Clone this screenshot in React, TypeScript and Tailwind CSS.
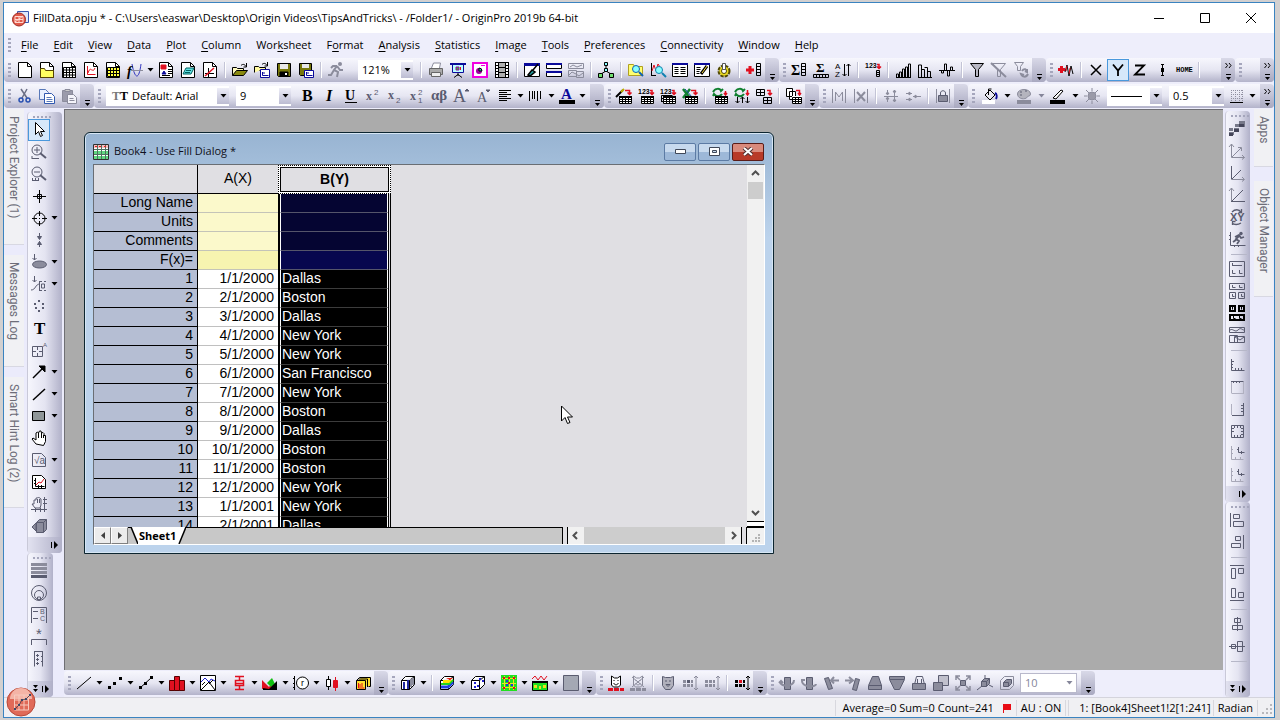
import type { ReactNode } from "react";

const K = "#000";
const G = "#8b8c9c";
const D = "#5a5c70";
const R = "#e01020";
const N = "#0a0a9a";

const p = (d: string, stroke = K, fill = "none", width = 1) => (
  <path key={d + stroke + fill} d={d} stroke={stroke} fill={fill} strokeWidth={width} />
);

const t = (text: string, x: number, y: number, size: number, fill = K, className = "font-['Liberation_Sans']") => (
  <text key={text + x + y} x={x} y={y} fontSize={size} fill={fill} className={className}>
    {text}
  </text>
);

const grid = (x: number, y: number, cols: number, rows: number, w: number, h: number) => {
  let d = "";
  for (let i = 0; i <= cols; i++) d += `M${x + i * w} ${y}v${rows * h}`;
  for (let j = 0; j <= rows; j++) d += `M${x} ${y + j * h}h${cols * w}`;
  return d;
};

const PAGE = "M1.5 .5h9l4 4v11h-13z";
const FOLD = "M10.5 .5v4h4";
const RED_TURN = "M9 2.500h4.500v4M11.500 4.500l2 2 2-2";
const SERIF = "font-['Liberation_Serif'] font-bold";
const smallGrid = (c = K) => (
  <g key="grid">
    <path d="M3 8h13v8H3z" fill="#fff" />
    {p(grid(3.5, 9.5, 4, 3, 3, 2), c)}
    {p("M3 9h13", c, "none", 2)}
  </g>
);
const page = (...inside: ReactNode[]) => [p(PAGE, K, "#fff"), p(FOLD), ...inside];
const lens = (x: number, y: number, c: string, fill = "#8ff") => (
  <g key="lens">
    {p(`M${x + 3} ${y + 3}l4 4`, c, "none", 2)}
    <circle cx={x} cy={y} r={3.5} stroke={c} fill={fill} />
  </g>
);
const cubeFace = (c: string, fill: string) => p("M1.500 5.500l4-4h9v8l-5 5h-8zM1.500 5.500h8l5-4M9.500 5.500v9", c, fill);
const facemask = (c: string, fill: string) => (
  <g key="mask">
    {p("M3.500 1v9l2 2h5l2-2v-9l-3 2h-3z", c, fill)}
    {p("M6 5v1M10 5v1M5.500 8l2 2h1l2-2", c)}
  </g>
);
const dots = (c: string, c2: string) => [
  p("M1 6.500h3M5 6.500h3M9 6.500h2M1 10.500h3M5 10.500h3M9 10.500h2", c, "none", 3),
  p("M5 6.500h3", c2, "none", 3),
  p("M14 1v14M12 3l2-2 2 2M12 13l2 2 2-2", c),
];

const icons: Record<string, ReactNode> = {
  newProject: page(),
  newFolder: page(p("M1.500 15.500v-9h4l1 2h8v7h-13z", "#554400", "#ffff60")),
  newBook: page(p(grid(2.5, 5.5, 4, 4, 3, 2.5))),
  newGraph: page(p("M4.500 4v8.500h8", R), p("M5 11c2-6 3-3 4-3s1 2 3-2", R)),
  newMatrix: page(p("M3 6h11v9h-11z", "none", "#ffff40"), p(grid(2.5, 5.5, 4, 3, 3, 3))),
  newFunction: [p("M5 2c3 16 7 16 9 0", "#3438c0"), p("M4 8.500h12", G), t("f", 0, 14, 14, K, `${SERIF} italic`)],
  newLayout: page(
    p("M3 3h5v4h-5z", R, R),
    p("M4 12l2-3 2 3z", N, N),
    p("M10 7.500h4M10 9.500h4M10 11.500h4M4 13.500h8", K)
  ),
  newNotes: page(p("M3 12l3-6h8l-3 6h-8z", "#006060", "#60e0e0"), p("M6 8.500h5M5 10.500h5", "#006060")),
  newDiagram: page(p("M3 11.500h9M6.500 6v9", K), p("M3 14l9-8", R, "none", 1.5)),
  openFile: [
    p("M.5 13.500v-8h4l1 1h6v3", K, "#fffbc0"),
    p("M.5 13.500l4-5h11l-4 5z", K, "#8a8a10"),
    p("M9 3.500c2-2 4-1 5 1M14.500 1v4h-3", K),
  ],
  openTemplate: [
    p("M.5 10.500v-6h4l1 1h6v3h-6", K, "#fff9a0"),
    p("M6.500 7.500h9v8h-9z", N, "#fff"),
    p("M8.500 10v3.500h6M10 12v-2", N),
    p("M8 2.500c2-2 4-1 5 1M13.500 0v4h-3"),
  ],
  save: [p("M1.500 1.500h13v13h-12l-1-1z", K, "#77770a"), p("M4 2h8v5h-8z", "none", "#e8e8e8"), p("M4 10h8v4h-8z", K, K), p("M10 11v2", "#fff", "none", 2)],
  saveTemplate: [p("M1.500 1.500h12v12h-11l-1-1z", K, "#77770a"), p("M4 2h7v4h-7z", "none", "#e8e8e8"), p("M6.500 8.500h9v7h-9z", N, "#fff"), p("M8.500 10v3.500h6M10 12v-2", N)],
  run: [p("M9 4l-3 4 4 2-1 5M6 8l-3 5h-3M9 4l3 4h3M9 4h-4l-2 2", G, "none", 2), <circle key="h" cx="12" cy="2" r="2" fill={G} />],
  print: [p("M3.500 6l2-5h7l-1 5", G, "#fff"), p("M1.500 6.500h13v6h-13z", "#666", "#aaa"), p("M3.500 10.500h9v4h-9z", "#666", "#eee")],
  slides: [p("M2.500 3v7.500h11v-7.500", N, "#bff"), p("M0 2h16", N, "none", 2), p("M8 11v3M4 15.500l4-3 4 3", K), p("M6 5h3v3h-3z", "#a000a0", "#30c030"), p("M10.500 5v3", R)],
  video: [p("M1 1h14v14h-14z", "#f000e0", "#fff", 2), <circle key="c" cx="7" cy="9" r="3" fill="#a000a0" />, p("M9 3.500h4", "#f000e0"), p("M7 9v-3a3 3 0 0 1 3 3z", K, "#30c0c0")],
  film: [p("M1 0h14v16h-14z", "none", K), p("M5 1h6v4h-6zM5 6h6v4h-6zM5 11h6v4h-6z", "none", "#b0b0b0"), <path key="holes" d="M3 1v15M13 1v15" stroke="#fff" strokeWidth="2" strokeDasharray="2 1" />],
  codeBuilder: [p("M.5 2.500h15v12h-15z", K, "#fff"), p("M0 2.500h16", N, "none", 3), p("M4 13l4-5 3 2-5 4zM9 8l5-6", K, "#20a0a0", 1.5)],
  splitRows: [p("M.5 1.500h15v5h-15zM.5 9.500h15v5h-15z", K, "#fff"), p("M0 2h16M0 10h16", N, "none", 2)],
  dualWave: [p("M.5 1.500h15v5h-15zM.5 8.500h8v6h-8zM8.500 9.500h7v6h-7z", G), p("M2 5l3-2 4 2 5-2M1 13l3-3 4 2 3 2 4-3", G)],
  tree: [
    p("M8 4v3M8 9l-5 3M8 9l5 3"),
    p("M6.500.5h3v3h-3z", K, "#8ff"),
    p("M.5 11.500h4v4h-4zM11.500 11.500h4v4h-4z", K, "#70e070"),
    p("M6.500 6.500h3v3h-3z", K, "#8ff"),
  ],
  findFolder: [p("M.5 13.500v-11h5l1 2h8v9z", "#b0a020", "#ffff70"), lens(8, 7, "#1060b0")],
  findGraph: [p("M1.500 1v13M1 13.500h5", K), p("M2 9l2-6 2 6 2-7 2 3", R), lens(9, 8, "#1080b0")],
  results: [p("M.5 1.500h15v13h-15z", K, "#fff"), p("M0 2h16", N, "none", 2), p("M2.500 5.500h4M8.500 5.500h5M2.500 7.500h4M8.500 7.500h5M2.500 9.500h4M8.500 9.500h5M2.500 11.500h4M8.500 11.500h5")],
  editResults: [p("M.5 1.500h15v13h-15z", K, "#fff"), p("M0 2h16", N, "none", 2), p("M2.500 5.500h4M2.500 7.500h4M2.500 9.500h3M2.500 11.500h3"), p("M7 12l6-8", K, "none", 3), p("M8 11l5-7", "#ffe040")],
  gear: [
    <circle key="a" cx="8" cy="9" r="5" stroke="#504800" fill="#e8d820" strokeDasharray="3 1" strokeWidth={3} />,
    <circle key="b" cx="8" cy="9" r="4.500" fill="#e8d820" />,
    <circle key="c" cx="8" cy="9" r="2.500" stroke="#504800" fill="#fff" />,
    p("M6.500 1.500h3v6h-3z", "#555", "#fff"),
  ],
  addColumn: [p("M0 8h8M4 4v8", R, "none", 3), p(grid(10.5, 1.5, 1, 4, 4, 3), K, "#fff")],
  sumColumn: [t("Σ", 0, 13, 14, K, SERIF), p(grid(10.5, 1.5, 1, 4, 4, 3), K, "#fff")],
  sumRow: [t("Σ", 3, 10, 13, K, SERIF), p(grid(0.5, 12.5, 5, 1, 3, 3), K, "#fff")],
  sort: [t("A", 0, 7, 8), t("Z", 0, 15, 8), p("M9.500 2v12M7.500 12l2 2 2-2M13.500 14v-12M11.500 4l2-2 2 2")],
  setValues: [t("123", 0, 6, 7, K, "font-['Liberation_Sans'] font-bold"), p("M12 2.500h2v4M12 4.500l2 2 2-2", R, "none", 1.5), p(grid(11.5, 8.5, 1, 3, 3, 2), K, "#fff")],
  barsUp: [p("M1.500 15v-3h2v3M4.500 15v-5h2v5M7.500 15v-8h2v8M10.500 15v-10h2v10M13.500 15v-13h2v13M1 15.500h15")],
  bars: [p("M1.500 15v-12h3v12M4.500 7.500h3v8M7.500 5.500h3v10M10.500 9.500h3v6M1 15.500h14")],
  stock: [p("M0 8.500h16M2.500 8v3h2v-3M5.500 8v-6h2v6M8.500 8v6h2v-6M11.500 8v-3h2v3")],
  filter: [p("M1.500 1.500h13l-5 6v7h-3v-7z", K, "#b8b8c4")],
  filterOff: [p("M1.500 1.500h13l-5 6v7h-3v-7z", G), p("M0 1l15 14", G, "none", 2)],
  filterRedo: [p("M1.500 .5h9l-3 4v4h-3v-4z", G), p("M9 9c2-3 5-2 5 1l-2-1M15 12c-2 4-6 3-7 0l3 1M14 7v4", G, "none", 2)],
  addPeak: [p("M0 7.500h7M3.500 4v7", R, "none", 3), p("M7 10l2-7 2 11 2-10 2 8", K), p("M8 9l1-5M11 12l1-6", R)],
  xAxis: [p("M3 3l10 10M13 3l-10 10", K, "none", 1.5)],
  yAxis: [p("M3 2.500l5 6 5-6M8 8v6", K, "none", 1.8)],
  zAxis: [p("M3 3.500h9l-9 9h10", K, "none", 1.8)],
  errorBar: [p("M8.500 2v12M7 2.500h3M7 13.500h3"), p("M8.500 6v4", K, "none", 3)],
  home: [t("HOME", 0, 10, 7, K, "font-['Liberation_Mono'] font-bold")],

  cut: [p("M4 1l6 9M10 1l-5 9", "#6a6e84", "none", 1.5), <circle key="a" cx="4" cy="12" r="2" stroke="#2850b0" strokeWidth="1.500" />, <circle key="b" cx="11" cy="12" r="2" stroke="#2850b0" strokeWidth="1.500" />],
  copy: [p("M.5 1.500h6l3 3v7h-9z", "#5878b8", "#e8f0ff"), p("M5.500 5.500h7l3 3v7h-10z", "#3058b0", "#fff"), p("M7.500 9.500h5M7.500 11.500h6M7.500 13.500h6", "#5878b8")],
  paste: [p("M1.500 2.500h10v11h-10z", G, "#9b9bab"), p("M4 1.500h5v2h-5z", G, "#ccc"), p("M6.500 6.500h6l3 3v6h-9z", G, "#f4f4fa"), p("M8.500 10.500h4M8.500 12.500h5", G)],
  bold: [t("B", 3, 13, 16, K, SERIF)],
  italic: [t("I", 5, 13, 16, K, `${SERIF} italic`)],
  underline: [t("U", 2, 12, 14, K, SERIF), p("M2 14.500h12")],
  superscript: [t("x", 1, 12, 12, D, SERIF), t("2", 9, 7, 8, D)],
  subscript: [t("x", 1, 11, 12, D, SERIF), t("2", 9, 15, 8, D)],
  supersub: [t("x", 1, 12, 12, D, SERIF), t("2", 9, 7, 8, D), t("1", 9, 15, 8, D)],
  greek: [t("αβ", 0, 12, 15, D, SERIF)],
  bigger: [t("A", 0, 14, 18, D, "font-['Liberation_Serif']"), p("M12 3l2-2 2 2z", D, D)],
  smaller: [t("A", 2, 14, 14, D, "font-['Liberation_Serif']"), p("M11 2l2 2 2-2z", D, D)],
  align: [p("M2 2.500h12M2 4.500h8M2 6.500h12M2 8.500h8M2 10.500h12M2 12.500h8")],
  lines: [p("M1.500 3v10M4.500 3v8M6.500 3v8M9.500 3v10M12.500 3v8")],
  fontColor: [t("A", 2, 11, 15, N, SERIF), p("M0 14h16", K, "none", 4)],
  wizard: [p("M0 9l7-7", K, "none", 2), p("M5 4l3-3", "#c0b000", "none", 2), p(RED_TURN, R, "none", 1.5), smallGrid()],
  import123: [t("123", 0, 6, 7, K, "font-['Liberation_Sans'] font-bold"), p("M12 2.500h2v4M12 4.500l2 2 2-2", R, "none", 1.5), smallGrid()],
  importMulti: [t("123", 0, 6, 7, K, "font-['Liberation_Sans'] font-bold"), p("M12 2.500h2v4M12 4.500l2 2 2-2", R, "none", 1.5), p("M1.500 14v-6.500h11M1 10.500h3M1 13.500h3"), smallGrid()],
  excel: [p("M1 1l7 9M8 1l-7 9", "#108030", "none", 2.5), p("M3 1l7 8", "#1050a0"), p(RED_TURN, R, "none", 1.5), smallGrid()],
  reimport: [p("M1 4c2-4 7-4 8-1l2-2M10 6c-2 3-6 3-8 0l-1 2", "#108030", "none", 2), p("M13.500 3v3.500M12 5l1.500 2 1.500-2", R, "none", 1.5), smallGrid()],
  reimportAll: [p("M1 4c2-4 7-4 8-1l2-2M10 6c-2 3-6 3-8 0l-1 2", "#108030", "none", 2), p("M13.500 2v4M12 5l1.500 2 1.500-2", R, "none", 1.5), p("M3.500 9v6M1.500 13l2 2 2-2M8.500 15v-6M6.500 11l2-2 2 2M13.500 9v6M11.500 13l2 2 2-2")],
  cloneImport: [p(grid(0.5, 1.5, 2, 2, 4, 3), K, "#fff"), p("M11 2.500h3v4M12 5l2 2 2-2", R, "none", 1.5), p(grid(7.5, 9.5, 2, 2, 4, 3), K, "#fff")],
  batch: [p("M.5.5h6v8h-6zM3.500 3.500h6v8h-6z", K, "#fff"), p("M10 2.500h3.500v4M12 5l1.500 2 1.500-2", R, "none", 1.5), p("M6 8h10v8h-10z", "none", "#fff"), p(grid(6.5, 9.5, 3, 3, 3, 2))],
  maskM: [p("M1.500 1v14M14.500 1v14M4.500 13v-9l3.500 5 3.500-5v9", G)],
  maskX: [p("M1.500 1v14M14.500 1v14", G), p("M4 4l8 9M12 4l-8 9", G, "none", 2)],
  nudgeV: [p("M4.500 2v4M4.500 10v4M11.500 2v12M1 8.500h14", G), p("M3 5h3l-1.500 2zM3 11h3l-1.500-2zM10 4h3l-1.500-2zM10 12h3l-1.500 2z", G, G)],
  nudgeH: [p("M1 5.500h6M1 11.500h6M8 8.500h8", G), p("M4 4v3l2-1.500zM5 10v3l-2-1.500zM11 7v3l-2-1.500z", G, G)],
  lock: [p("M1.500 1v14M14.500 1v14", G), p("M5.500 7v-2c0-3 5-3 5 0v2", D), p("M3.500 7.500h9v6h-9z", D, G)],
  fill: [p("M3 7l5-5 5 5-5 5z", K, "#e8e8f0"), p("M6.500 7v-6h3", K), p("M13 5c2 1 2 4 1 6", N, "none", 2), p("M0 14h13", "#fff", "none", 4)],
  palette: [p("M1.500 6c0-6 13-6 13 0 0 3-3 1-4 4-4 2-9 0-9-4z", G, "#b4b4be"), p("M4 4h2M9 3h2M4 7h2", D), p("M1 14h14", G, "none", 4)],
  lineColor: [p("M3 10l8-8 2 1-7 8z", K, "#fff"), p("M0 14h15", K, "none", 4)],
  light: [<circle key="c" cx="8" cy="8" r="4" fill="#9a9aa8" stroke={G} />, p("M8 0v3M8 13v3M0 8h3M13 8h3M2 2l3 3M14 2l-3 3M2 14l3-3M14 14l-3-3", G)],
  border: [
    <path key="dots" d="M2 2.500h12M2 6.500h12M2 10.500h12M2.500 2v12M6.500 2v12M10.500 2v12M13.500 2v12" stroke="#9090a0" strokeDasharray="1 1" />,
    p("M1 14.500h13", K),
  ],

  pointer: [p("M4.500.5v12l3-3 2 5 2-1-2-4h4z", K, "#fff")],
  zoomIn: [p("M9 9l6 5", D, "none", 2), <circle key="c" cx="6" cy="6" r="5" stroke={D} />, p("M3 6h6M6 3v6M1 12v3M1 14.500h7", D)],
  zoomOut: [p("M9 9l6 5", D, "none", 2), <circle key="c" cx="6" cy="6" r="5" stroke={D} />, p("M3 6h6M1.500 12v3M4.500 12v3M7.500 12v3M1 14.500h7", D)],
  crosshair: [p("M8.500 2v13M2 8.500h13"), p("M6.500 6.500h4v4h-4z")],
  reader: [<circle key="c" cx="8.500" cy="8.500" r="5.500" stroke={K} />, p("M8.500 1v5M8.500 11v5M1 8.500h5M11 8.500h5M8 8.500h1")],
  pickV: [p("M8.500 1v6M8.500 9v6", D), p("M6.500 4.500h4l-2 3zM6.500 12.500h4l-2-3z", D, D)],
  regionPick: [p("M3.500 0v6M1.500 4l2 2 2-2", D), <ellipse key="e" cx="8.500" cy="10.500" rx="7" ry="3.500" fill={G} stroke={D} />],
  regionMask: [p("M3.500 0v6M1.500 4l2 2 2-2M0 14c5 0 4-6 9-6M8 5.500h3M13 5.500h2M8.500 5v10M8 14.500h3M13 14.500h2M10.500 8v4h3v-4z", D)],
  scatter: [p("M7 3h2M3 6h2M11 6h2M4 10h2M11 10h2M7 13h2", D, "none", 2)],
  text: [t("T", 3, 14, 17, K, SERIF)],
  annotate: [p("M1.500 4.500h10v10h-10zM1 9.500h4M8 9.500h4M6.500 4v4M6.500 11v4", D), t("A", 12, 5, 6, D)],
  arrow: [p("M2 14l9-9", K, "none", 1.5), p("M8 2h6v6z", K, K)],
  line: [p("M2 14l12-11", K, "none", 1.5)],
  rect: [p("M1.500 3.500h12v9h-12z", K, "#8f9698")],
  hand: [p("M5 14l-4-5 1-1 3 2v-7l1.500-1 1 1 1-2 1.500 0 .5 2 1.500-.5 1 1v2l1.500 0v6l-2 4z", K, "#fff"), p("M7.500 3v5M10.500 3v5M12.500 5v3")],
  equation: [p("M1.500 1.500h9l4 4v9h-13z", D), t("√a", 3, 12, 10, D)],
  insertGraph: [p("M1.500 1.500h9l4 4v9h-13z", K, "#fff"), p("M4.500 4v8.500h9M3 6.500h2M3 9.500h2M7.500 11v3M10.500 11v3"), p("M5 11l3-3 2 1 3-4", R)],
  pan: [p("M4 12l-3-4h2v-4h2v-2h1.500l1-1 1 1 1.500 1v6l-1 3zM6.500 3v4M8.500 3v4", D), p("M13.500 1v15M12 3.500h4M12 7.500h4M0 13.500h16M4.500 12v4M9.500 12v4", D)],
  cube: [p("M5.500 4.500l3-3h7v10l-3 3h-7zM5.500 4.500h7v10M12.500 4.500l3-3", D, G), p("M5 5l-4 4 4 4z", D, G)],
  bands: [p("M0 1.500h16M0 5.500h16M0 9.500h16", G, "none", 3), p("M0 13.500h16", D, "none", 3)],
  rings: [<circle key="a" cx="8" cy="8" r="7.500" stroke={D} />, <circle key="b" cx="8" cy="10" r="4.500" stroke={D} />, p("M6.500 15v-3h3v3", D)],
  legend: [p("M.5 16v-15.500h15v15.500M2 4.500h5M2 11.500h5", D), t("B", 9, 7, 7, D), t("C", 9, 14, 7, D)],
  asterisk: [t("*", 5, 10, 15, D), p("M.5 16v-5.500h15v5.500", D)],
  ruler: [p("M3.500 0v15.500M11.500 0v15.500M3 .5h9M5 4.500h3M5 8.500h3M5 12.500h3M6.500 3v3M6.500 7v3M6.500 11v3M10 5.500h2M10 10.500h2", D)],

  layers: [p("M0 12.500h5M5 8.500h5M10 4.500h6M0 8.500h4M6 4.500h4M10 1.500h6", "#77798a", "none", 3), p("M0 13.500h4M5 9.500h5M10 4.500h5", "#45465a", "none", 3)],
  axes3: [p("M2.500 1v13.500h13M3 14l9-9M0 4l2.500-3 2.500 3M13 12l2.500 2.500-2.500 2M9 4.500h3.500v3.500", G)],
  axesDown: [p("M2.500 1v13.500M3 14l9-9", D), p("M3 14.500h12M13 12l2.500 2.500-2.500 2", G)],
  axesUp: [p("M2 14.500h14M3 14l11-11", D), p("M2.500 1v13M0 4l2.500-3 2.500 3", G)],
  swapXY: [t("XY", 1, 12, 11, D, "font-['Liberation_Sans'] font-bold"), p("M3 3c3-3 7-3 9 0M12.500 0v3.500h-3M12 14c-3 2-7 2-9 0M3.500 16v-3.500h3", D, "none", 1.3)],
  runAxis: [p("M1.500 1v13.500h15M0 4.500h2M0 8.500h2M5.500 14v2M9.500 14v2", D), p("M10 5l-3 3 3 2-2 3M6 6l4-2 2 3 3-1M7 9l-3 2", D, "none", 1.8), <circle key="c" cx="12" cy="2.500" r="1.700" fill={D} />],
  panelOne: [p("M.5.5h15v15h-15zM3 4.500h10M3.500 2v3M3.500 9v3.500h3M10.500 9v3.500h3", D)],
  panelFour: [p("M.5 .5h15v6h-15zM.5 9.500h6v6h-6zM9.500 9.500h6v6h-6zM3.500 2v2.500h3M10.500 2v2.500h3M3.500 11v2.500h2M12.500 11v2.500h2", D)],
  panelTwo: [p("M1 1h5v5h-5zM10 1h5v5h-5zM1 10h14v5h-14z", K, "none", 2), p("M3.500 2v2.500M12.500 2v2.500M4.500 11v2.500h2M10.500 11v2.500h2")],
  panelWave: [p("M.5 .5h15v5h-15zM.5 8.500h8v7h-8zM5.500 9.500h10v6h-10zM1 3c3-2 5 3 8 0s4 0 6 0M6 10l5 3 4-3", D)],
  frameL: [p("M2.500 2v11.500h13M2 4.500h3M2 7.500h2M2 10.500h2M6.500 13v-2M9.500 13v-2M12.500 13v-2", D)],
  frameT: [p("M2 2.500h12.500M4.500 2v2M7.500 2v2M10.500 2v2", D), p("M2.500 3v11.500M3 14.500h12M14.500 3v11", "#b0b0c0")],
  frameR: [p("M14.500 2v12.500M12 4.500h2M12 7.500h2M12 10.500h2M3 14.500h12", D), p("M2.500 3v11", "#b0b0c0")],
  frameAll: [p("M2.500 2.500h12v12h-12zM5.500 3v2M8.500 3v2M11.500 3v2M3 5.500h2M12 5.500h2M3 8.500h2M12 8.500h2M12 11.500h2M5.500 12v2M8.500 12v2M11.500 12v2", D)],
  inset: [p("M2.500 1v13.500h12M2 4.500h2M2 8.500h2M6.500 14v-2M11.500 14v-2", "#a8a8b8"), p("M9.500 2v5.500h6M8 4.500h2M12.500 6v3", D)],
  alignLeft: [p("M1.500 1v14", D), p("M4.500 2.500h6v4h-6zM4.500 9.500h10v5h-10z", D)],
  alignRight: [p("M14.500 1v14", D), p("M6.500 2.500h5v4h-5zM2.500 9.500h9v4h-9z", D)],
  alignTop: [p("M1 1.500h14", D), p("M2.500 4.500h4v10h-4zM9.500 4.500h5v5h-5z", D)],
  alignBottom: [p("M1 14.500h14", D), p("M2.500 2.500h4v9h-4zM9.500 6.500h5v5h-5z", D)],
  alignCenter: [p("M8.500 1v14M5.500 2.500h6v4h-6zM3.500 9.500h10v4h-10z", D)],
  alignMiddle: [p("M0 8.500h16M2.500 6.500h4v4h-4zM8.500 3.500h5v10h-5z", D)],

  linePlot: [p("M1 14l14-12", K)],
  scatterPlot: [p("M1 12.500h3M6 8.500h3M12 3.500h3", K, "none", 3)],
  lineSymbol: [p("M2 13l11-10", K), p("M1 12.500h3M6 8.500h3M12 2.500h3", K, "none", 3)],
  column: [p("M.5 5.500h5v10h-5zM5.500 1.500h5v14h-5zM10.500 5.500h5v10h-5z", "#500", R)],
  multiPanel: [p("M.5.5h15v15h-15z", K, "#fff"), p("M1 7l4-4 4 4 2-3 4 2", "#2020d0"), p("M1 15l8-8 6 8M2 10l3-3M9 9l4-4", K)],
  box: [p("M4 1.500h9M8.500 1v4M4.500 5.500h8v5h-8zM4 8.500h9M8.500 11v4M4 14.500h9", R, "none", 1.5)],
  area: [p("M0 14v-9l7 7 3-4 3 2v4z", "none", R), p("M5 8l5-5 3 6-4 3z", "none", "#10c010"), p("M7 14l8-8v9h-14v-2z", "none", K)],
  polar: [p("M1.500 1v14M0 3.500h2M0 8.500h2M0 12.500h2"), <circle key="c" cx="9.500" cy="8" r="6" stroke={K} fill="#fff" />, t("r", 8, 11, 9)],
  candle: [p("M4.500 1v14"), p("M2.500 4.500h4v7h-4z", K, "#fff"), p("M11.500 2v14", R), p("M9.500 5.500h4v7h-4z", R, R)],
  template: [p("M4.500 2.500h11v9h-2M1.500 5.500l3-3M1.500 5.500h9v9h-9zM3.500 4h9v8", K, "#ffe030"), p("M3.500 8v5h6M5 12v-3M7 12v-4", R)],
  bars3d: [cubeFace(K, "#fff"), p("M4 14v-7M8 14v-9", "#2028a0", "none", 2), p("M11 12v-8M13 10v-7", G, "none", 2)],
  surface: [cubeFace(K, "#fff"), p("M2 12h7l5-5", "#2040e0", "none", 3), p("M2 9h8l4-4", "#20d020", "none", 2), p("M4 5h9l-3 3h-6z", "none", "#ffe000"), p("M7 3h7l-3 2z", "none", "#f02010")],
  scatter3d: [cubeFace(K, "#fff"), p("M4 8h2M7 11h2M9 4h2M12 6h2M4 12h2", "#2020d0", "none", 2)],
  contour: [p("M0 0h16v16h-16z", "none", "#20e020"), p("M3.500 1v14M8.500 1v14M12.500 1v14M1 3.500h14M1 8.500h14M1 12.500h14", "#f0e020"), p("M2 3h2M12 3h2M7 8h2M2 13h2M12 13h2M7 3h2", R, "none", 2), p("M5 6h2M10 10h2M5 10h2", "#2030e0", "none", 2)],
  contourLine: [p("M0 4l3-3 3 4 3-4 3 4 3-4", R), p("M.5 7.500h15v8h-15z", K, "#20e020"), p("M2 11.500h3M7 12.500h2M11 11.500h3", "#f0e020", "none", 3), p("M0 7h16", K, "none", 2)],
  image: [p("M.5.5h15v15h-15z", D, "#a4a8b4")],
  mask: [facemask(K, "#fff"), p("M0 14.500h5M6 14.500h5M12 14.500h4", R, "none", 3)],
  unmask: [facemask(G, "none"), p("M2 2l12 10M14 2l-12 10", G), p("M0 14.500h5M6 14.500h5M12 14.500h4", G, "none", 3)],
  shield: [p("M2.500 1.500l3 1h5l3-1v9l-3 4h-5l-3-4z", D, "#b0b0bc"), p("M5 6h2M9 6h2M6 9.500h4l-2 2z", D)],
  rangeA: dots(G, D),
  rangeB: dots(G, G),
  rangeC: dots(K, R),
  rotateL: [p("M5.500 2.500h6v12h-6z", D, G), p("M1 7c0 5 14 5 14-2M0 8l2-2 2 2", G, "none", 2)],
  rotateR: [p("M5.500 2.500h6v12h-6z", D, G), p("M15 9c0 4-14 3-14-3M0 5h4", G, "none", 2)],
  tiltL: [p("M1.500 3.500l4-1 4 11-4 1z", D, G), p("M8 5.500h8M11 2l-3 3.500 3 3", G, "none", 2)],
  tiltR: [p("M10.500 3.500l4 1-3 11-4-1z", D, G), p("M0 5.500h7M4 2l4 3.500-4 3", G, "none", 2)],
  perspUp: [p("M5.500 1.500h6l3 9v4h-13v-4zM2 10.500h13", D, G)],
  perspDown: [p("M.5 1.500h15v3l-5 10h-5l-5-10zM1 4.500h14", D, G)],
  boxUp: [p("M5.500 1.500h6l2 8h-10z", D), p("M1.500 8.500h13v6h-13z", D, G), p("M6.500 4v5M10.500 4v5", D)],
  resize3d: [p("M5.500.5h10v10h-10z", D, "#c0c0cc"), p("M.5 7.500h9v8h-9z", D, G)],
  fit: [p("M5.500 5.500h5v5h-5z", D, G), p("M1 1l4 4M15 1l-4 4M1 15l4-4M15 15l-4-4M1 5v-4h4M11 1h4v4M1 11v4h4M11 15h4v-4", G, "none", 1.5)],
  cubeAxis: [p("M4.500 6.500l3-3h5v5l-3 3h-5zM4.500 6.500h5v5M9.500 6.500l3-3M8 0v4M0 15l5-4M12 10l4 2", D, G)],
  cubeFrame: [p("M1.500 5.500l4-4h9v9l-4 4h-9z", G), p("M4.500 7.500l3-3h5v4l-3 3h-5zM4.500 7.500h5v4", D, G)],
};

const Icon = ({ name }: { name: string }) => (
  <svg viewBox="0 0 16 16" className="h-4 w-4 shrink-0 overflow-visible" fill="none" aria-hidden="true">
    {icons[name]}
  </svg>
);

const Caret = ({ dim }: { dim?: boolean }) => (
  <svg viewBox="0 0 7 4" width="7" height="4" className={dim ? "fill-[#85869a]" : "fill-black"} aria-hidden="true">
    <path d="M.5 0h6l-3 3.500z" />
  </svg>
);

const DIM_ARROWS = ["palette"];

/* items: icon names, "|" for a separator, a trailing "+" for a drop-down arrow */
const Tools = ({ items, active, wide }: { items: string; active?: string; wide?: boolean }) => (
  <>
    {items.split(" ").map((item, i) => {
      if (item === "|") return <span key={i} className="mx-[3px] h-4 w-0.5 shrink-0 border-l border-[#c3c4d6] bg-white" />;
      const name = item.replace("+", "");
      return (
        <span key={i} className="flex shrink-0 items-center">
          <button
            type="button"
            aria-label={name}
            className={
              name === active
                ? "flex h-[22px] w-[22px] items-center justify-center border border-[#4a98dc] bg-[#d6e8fa]"
                : "flex h-[22px] w-[22px] items-center justify-center"
            }
          >
            <Icon name={name} />
          </button>
          {item.endsWith("+") && (
            <button
              type="button"
              aria-label={`${name} options`}
              className={wide ? "flex h-5 w-3 items-center justify-center" : "flex h-5 w-[9px] items-center justify-center"}
            >
              <Caret dim={DIM_ARROWS.includes(name)} />
            </button>
          )}
        </span>
      );
    })}
  </>
);

const Grip = () => (
  <span className="mr-0.5 ml-1 h-[14px] w-[3px] shrink-0 bg-[repeating-linear-gradient(to_bottom,#a5a6bc_0_2px,transparent_2px_4px)]" />
);

const Overflow = ({ more }: { more?: boolean }) => (
  <button
    type="button"
    aria-label="Toolbar options"
    className="flex h-full w-3.5 shrink-0 flex-col items-center justify-end gap-1 rounded-r-[4px] bg-linear-to-b from-[#d9d9e8] to-[#a9a9c0] pb-0.5"
  >
    {more && (
      <svg viewBox="0 0 7 5" width="7" height="5" className="mb-0.5" fill="none" stroke="#000" aria-hidden="true">
        <path d="M.5 0l2 2.500-2 2.500M4 0l2 2.500-2 2.500" />
      </svg>
    )}
    <svg viewBox="0 0 7 6" width="7" height="6" aria-hidden="true">
      <path d="M1 0h5v1H1zM1 3h5l-2.500 3z" />
    </svg>
  </button>
);

const Bar = ({ children, more, grow }: { children?: ReactNode; more?: boolean; grow?: boolean }) => (
  <div
    className={
      grow
        ? "flex h-6 min-w-0 grow items-center rounded-[4px] bg-linear-to-b from-[#f7f7fd] via-[#e6e6f2] to-[#b3b3ca]"
        : "flex h-6 shrink-0 items-center rounded-[4px] bg-linear-to-b from-[#f7f7fd] via-[#e6e6f2] to-[#b3b3ca]"
    }
  >
    <Grip />
    {children}
    {grow && <span className="grow" />}
    <Overflow more={more} />
  </div>
);

const Combo = ({ label, value, className, children, dim }: { label: string; value: string; className: string; children?: ReactNode; dim?: boolean }) => (
  <div className={`flex h-5 shrink-0 items-center bg-white ${className}`}>
    {children}
    <select
      aria-label={label}
      disabled={dim}
      className={`h-5 min-w-0 grow appearance-none bg-transparent pl-1 text-[11px] leading-5 outline-none ${dim ? "text-[#85869a]" : "text-black"}`}
    >
      <option>{value}</option>
    </select>
    <span className={dim ? "flex h-4 w-3.5 items-center justify-center" : "flex h-4 w-3 items-center justify-center bg-linear-to-b from-[#eeeef8] to-[#bcbcd2]"}>
      <Caret dim={dim} />
    </span>
  </div>
);

const menus = [
  "&File", "&Edit", "&View", "&Data", "&Plot", "&Column", "Wor&ksheet", "F&ormat", "&Analysis",
  "&Statistics", "&Image", "&Tools", "&Preferences", "&Connectivity", "&Window", "&Help",
];

const MenuBar = () => (
  <nav className="flex h-6 shrink-0 items-center bg-[#eeeefb]">
    <Grip />
    <div className="flex">
      {menus.map((menu) => {
        const [before, after] = menu.split("&");
        return (
          <button key={menu} type="button" className="pr-[7px] pl-2 text-[11px] leading-5">
            {before}
            <span className="underline underline-offset-2">{after[0]}</span>
            {after.slice(1)}
          </button>
        );
      })}
    </div>
  </nav>
);

const TitleBar = () => (
  <header className="flex h-[30px] shrink-0 items-center bg-white pl-2">
    <svg viewBox="0 0 17 17" width="17" height="17" fill="none" aria-hidden="true">
      <path d="M5.500 1.500h11v11h-11z" fill="#dfe8fa" stroke="#3858b0" />
      <circle cx="7" cy="9.500" r="6.500" fill="#e05848" stroke="#a02820" />
      <path d="M3 6.500h8v6H3zM3 9.500h8M7 6v7M3 12l8-6" stroke="#ffd8d0" />
    </svg>
    <h1 className="ml-1 grow truncate text-[11px]">
      FillData.opju * - C:\Users\easwar\Desktop\Origin Videos\TipsAndTricks\ - /Folder1/ - OriginPro 2019b 64-bit
    </h1>
    <button type="button" aria-label="Minimize" className="flex h-7 w-[46px] items-center justify-center">
      <svg width="10" height="10" stroke="#000" aria-hidden="true"><path d="M0 5.500h10" /></svg>
    </button>
    <button type="button" aria-label="Maximize" className="flex h-7 w-[46px] items-center justify-center">
      <svg width="10" height="10" fill="none" stroke="#000" aria-hidden="true"><path d="M.5.5h9v9h-9z" /></svg>
    </button>
    <button type="button" aria-label="Close" className="flex h-7 w-[46px] items-center justify-center">
      <svg width="10" height="10" stroke="#000" aria-hidden="true"><path d="M0 0l10 10M10 0L0 10" /></svg>
    </button>
  </header>
);

const TopTools = () => (
  <div className="flex shrink-0 flex-col gap-0.5 bg-[#eeeefb] py-px">
    <div className="flex">
      <Bar>
        <span className="w-px" />
        <Tools items="newProject newFolder newBook newGraph newMatrix newFunction+ newLayout newNotes newDiagram | openFile openTemplate save saveTemplate | run" />
        <Combo label="Zoom" value="121%" className="mr-1 ml-[11px] w-[55px]" />
        <Tools items="| print slides video film | codeBuilder splitRows dualWave | tree | findFolder findGraph results editResults gear | addColumn" />
      </Bar>
      <Bar>
        <Tools items="sumColumn sumRow sort | setValues | barsUp bars stock | filter filterOff filterRedo" />
      </Bar>
      <Bar more>
        <Tools active="yAxis" items="addPeak | xAxis yAxis zAxis errorBar home |" />
        <span className="w-[18px]" />
      </Bar>
      <Bar more grow />
    </div>
    <div className="flex">
      <Bar>
        <span className="w-px" />
        <Tools items="cut copy paste" />
      </Bar>
      <Bar>
        <Combo label="Font" value="Default: Arial" className="ml-[3px] w-[123px] pl-1.5">
          <span className="font-['Liberation_Serif'] text-xs leading-4 font-bold" aria-hidden="true">
            <span className="text-[#777]">T</span>T
          </span>
        </Combo>
        <Combo label="Font size" value="9" className="mr-[5px] ml-[7px] w-[55px]" />
        <Tools items="bold italic underline superscript subscript supersub greek bigger smaller align+ lines+ fontColor+" />
        <span className="w-[3px]" />
      </Bar>
      <Bar>
        <Tools items="wizard import123 importMulti excel | reimport reimportAll cloneImport | batch" />
      </Bar>
      <Bar>
        <Tools items="maskM maskX | nudgeV nudgeH | lock" />
      </Bar>
      <Bar more grow>
        <span className="w-0.5" />
        <Tools wide items="fill+ palette+ lineColor+ light" />
        <div className="mr-[7px] ml-1 flex h-5 w-[55px] shrink-0 items-center bg-white pl-1">
          <span className="h-px grow bg-black" />
          <button type="button" aria-label="Line style" className="ml-2 flex h-4 w-3 items-center justify-center bg-linear-to-b from-[#eeeef8] to-[#bcbcd2]">
            <Caret />
          </button>
        </div>
        <Combo label="Line width" value="0.5" className="mr-0.5 w-[55px]" />
        <Tools items="border+" />
      </Bar>
    </div>
  </div>
);

const BottomTools = () => (
  <div className="flex h-[27px] shrink-0 items-start bg-[#eeeefb] pt-px">
    <Bar>
      <Tools items="linePlot+ scatterPlot+ lineSymbol+ column+ multiPanel+ box+ area+ polar+ candle+ template" />
    </Bar>
    <Bar>
      <Tools items="bars3d+ | surface+ scatter3d+ contour+ contourLine+ image" />
    </Bar>
    <Bar>
      <Tools items="mask unmask | shield rangeA rangeB | rangeC" />
    </Bar>
    <Bar>
      <Tools items="rotateL rotateR tiltL tiltR perspUp perspDown boxUp resize3d fit cubeAxis cubeFrame" />
      <Combo label="Rotation step" value="10" className="mr-1 ml-0.5 w-[57px] border border-[#b9b9cc]" dim />
    </Bar>
  </div>
);

const SideGrip = () => (
  <span className="mt-1 mb-px ml-[5px] h-[2px] w-[18px] shrink-0 bg-[repeating-linear-gradient(to_right,#a5a6bc_0_2px,transparent_2px_4px)]" />
);

/* vertical counterpart of Tools */
const SideTools = ({ items, active }: { items: string; active?: string }) => (
  <>
    {items.split(" ").map((item, i) => {
      if (item === "|") return <span key={i} className="mt-1 mb-[3px] ml-[5px] h-px w-4 shrink-0 bg-[#b6b7c8]" />;
      const name = item.replace("+", "");
      return (
        <span key={i} className="flex h-[22px] shrink-0 items-center">
          <button
            type="button"
            aria-label={name}
            className={
              name === active
                ? "flex h-[22px] w-[22px] items-center justify-center border border-[#4a98dc] bg-[#d6e8fa]"
                : "flex h-[22px] w-[22px] items-center justify-center"
            }
          >
            <Icon name={name} />
          </button>
          {item.endsWith("+") && (
            <button type="button" aria-label={`${name} options`} className="flex h-5 w-[9px] items-center justify-center">
              <Caret />
            </button>
          )}
        </span>
      );
    })}
  </>
);

const SideOverflow = ({ more }: { more?: boolean }) => (
  <button type="button" aria-label="Toolbar options" className="flex h-4 w-full shrink-0 items-center justify-end gap-1 rounded-b-[4px] bg-linear-to-r from-[#e2e2f0] to-[#b0b0c8] pr-1">
    {more && (
      <svg width="5" height="8" aria-hidden="true">
        <path d="M0 0h5l-2.500 3zM0 4h5l-2.500 3z" />
      </svg>
    )}
    <svg width="7" height="8" aria-hidden="true">
      <path d="M0 1h1v6H0zM3 0l4 4-4 4z" />
    </svg>
  </button>
);

const DockTab = ({ label, className }: { label: string; className: string }) => (
  <button
    type="button"
    className={`flex w-full items-center justify-center border-b border-[#d8d8e2] bg-[#f1f1f4] pt-[7px] text-xs leading-4 text-[#6d6d78] [writing-mode:vertical-rl] ${className}`}
  >
    <span className="grow text-left font-[Roboto]">{label}</span>
  </button>
);

const LeftDock = () => (
  <aside className="flex w-[60px] shrink-0 bg-[#ebebfb]">
    <div className="flex w-[22px] shrink-0 flex-col gap-2.5 pr-0.5">
      <DockTab label="Project Explorer (1)" className="h-[136px]" />
      <DockTab label="Messages Log" className="h-[112px]" />
      <DockTab label="Smart Hint Log (2)" className="h-[131px]" />
    </div>
    <div className="flex min-h-0 grow flex-col pt-[3px]">
      <div className="ml-px flex w-[35px] shrink-0 flex-col rounded-[4px] border-l border-[#c9c9d8] bg-linear-to-r from-[#f6f6fd] via-[#e4e4f1] to-[#b1b1c9]">
        <SideGrip />
        <SideTools
          active="pointer"
          items="pointer zoomIn zoomOut crosshair reader+ pickV regionPick+ regionMask+ scatter text annotate arrow+ line+ rect+ hand equation+ insertGraph+ pan cube"
        />
        <SideOverflow />
      </div>
      <div className="ml-px flex min-h-0 w-[26px] grow flex-col rounded-[4px] border-l border-[#c9c9d8] bg-linear-to-r from-[#f6f6fd] via-[#e4e4f1] to-[#b1b1c9]">
        <SideGrip />
        <SideTools items="bands rings legend asterisk ruler" />
        <span className="grow" />
        <SideOverflow more />
      </div>
    </div>
  </aside>
);

const RightDock = () => (
  <aside className="flex w-[51px] shrink-0 gap-1 bg-[#ebebfb] pl-0.5">
    <div className="flex w-[25px] flex-col pt-0.5">
      <div className="flex shrink-0 flex-col rounded-[4px] border-l border-[#c9c9d8] bg-linear-to-r from-[#f6f6fd] via-[#e4e4f1] to-[#b1b1c9]">
        <SideGrip />
        <SideTools items="layers axes3 axesDown axesUp swapXY runAxis | panelOne panelFour panelTwo panelWave | frameL frameT frameR frameAll inset inset" />
        <SideOverflow />
      </div>
      <div className="flex min-h-0 grow flex-col rounded-[4px] border-l border-[#c9c9d8] bg-linear-to-r from-[#f6f6fd] via-[#e4e4f1] to-[#b1b1c9]">
        <SideGrip />
        <SideTools items="alignLeft alignRight | alignTop alignBottom | alignCenter alignMiddle |" />
        <span className="grow" />
        <SideOverflow more />
      </div>
    </div>
    <div className="flex w-[19px] flex-col gap-3.5">
      <DockTab label="Apps" className="h-[58px]" />
      <DockTab label="Object Manager" className="h-[116px]" />
    </div>
  </aside>
);

const cities = [
  "Dallas", "Boston", "Dallas", "New York", "New York", "San Francisco", "New York",
  "Boston", "Dallas", "Boston", "Boston", "New York", "New York", "Dallas",
];

const rows = cities.map((city, i) => ({
  id: i + 1,
  date: `${(i % 12) + 1}/1/${2000 + Math.floor(i / 12)}`,
  city,
}));

const labelRows = ["Long Name", "Units", "Comments", "F(x)="];

const Sheet = () => (
  <table className="w-[297px] table-fixed border-separate border-spacing-0 font-['Liberation_Sans'] text-sm leading-4">
    <colgroup>
      <col className="w-[104px]" />
      <col className="w-[80px]" />
      <col className="w-[113px]" />
    </colgroup>
    <thead>
      <tr className="h-[29px]">
        <td className="border-r border-b border-black bg-[#e0dfe3] p-0" />
        <th scope="col" className="border-b border-black bg-[#e0dfe3] p-0 pb-0.5 font-normal">A(X)</th>
        <th scope="col" className="border border-dotted border-black bg-white p-px">
          <span className="block h-[25px] border border-black bg-[#e0dfe3] leading-[22px]">B(Y)</span>
        </th>
      </tr>
    </thead>
    <tbody>
      {labelRows.map((label) => (
        <tr key={label} className="h-[19px]">
          <th scope="row" className="border-r border-b border-black bg-[#b5bed3] p-0 pr-1 pb-0.5 text-right font-normal">{label}</th>
          <td className={label === "F(x)=" ? "border-b border-[#c4c4b8] bg-[#f7f4b0] p-0" : "border-b border-[#c4c4b8] bg-[#fbf9cb] p-0"} />
          <td className="border-r-[3px] border-l-2 border-double border-black bg-white bg-clip-padding p-0">
            <span
              className={
                label === "F(x)="
                  ? "block h-[19px] border-x border-b border-x-white border-b-[#55556a] bg-[#07074e]"
                  : "block h-[19px] border-x border-b border-x-white border-b-[#55556a] bg-[#050532]"
              }
            />
          </td>
        </tr>
      ))}
      {rows.map((row) => (
        <tr key={row.id} className="h-[19px]">
          <th scope="row" className="border-r border-b border-black bg-[#b5bed3] p-0 pr-1 pb-0.5 text-right font-normal">{row.id}</th>
          <td className="border-b border-[#c0c0c0] bg-white p-0 pr-1 pb-0.5 text-right">{row.date}</td>
          <td className="border-r-[3px] border-l-2 border-double border-black bg-white bg-clip-padding p-0">
            <span className="block h-[19px] border-x border-b border-x-white border-b-[#3c3c3c] bg-black pl-px text-white">
              {row.city}
            </span>
          </td>
        </tr>
      ))}
    </tbody>
  </table>
);

const Chevron = ({ d }: { d: string }) => (
  <svg width="9" height="9" viewBox="0 0 9 9" fill="none" stroke="#505050" strokeWidth="2" aria-hidden="true">
    <path d={d} />
  </svg>
);

const BookWindow = () => (
  <section className="absolute top-[22px] left-[19px] flex h-[422px] w-[690px] flex-col rounded-t-[6px] border border-[#0c2530] bg-linear-to-b from-[#98b4d2] to-[#bcd3ec] to-25% px-2 pb-2 shadow-[inset_0_0_0_1px_#d6e6f4]">
    <div className="flex h-[31px] shrink-0 items-center pt-1.5">
      <svg viewBox="0 0 16 16" width="16" height="16" aria-hidden="true">
        <path d="M.5.5h15v15H.5z" fill="#fff" stroke="#303030" />
        <path d="M1 1h14v3H1z" fill="#f4c0c0" />
        <path d="M1 7h14v3H1zM1 12h14v3H1z" fill="#60d880" />
        <path d="M4.500 1v14M8.500 1v14M12.500 1v14M1 5.500h14M1 10.500h14" stroke="#507060" />
        <path d="M2 2.500h2M6 2.500h2M11 2.500h2" stroke="#e02020" />
      </svg>
      <h2 className="ml-[5px] grow text-[11px] text-[#101020]">Book4 - Use Fill Dialog *</h2>
      <div className="flex gap-0.5">
        <button type="button" aria-label="Minimize book" className="flex h-[18px] w-8 items-center justify-center rounded-[2px] border border-[#5c7ba4] bg-linear-to-b from-[#c8daee] from-50% to-[#9db8d8] to-50%">
          <svg width="11" height="5" aria-hidden="true"><path d="M.5.5h10v4H.5z" fill="#fff" stroke="#404858" /></svg>
        </button>
        <button type="button" aria-label="Maximize book" className="flex h-[18px] w-8 items-center justify-center rounded-[2px] border border-[#5c7ba4] bg-linear-to-b from-[#c8daee] from-50% to-[#9db8d8] to-50%">
          <svg width="11" height="9" fillRule="evenodd" aria-hidden="true"><path d="M.5.5h10v8H.5zM3.500 3.500h4v2h-4z" fill="#fff" stroke="#404858" /></svg>
        </button>
        <button type="button" aria-label="Close book" className="mr-px flex h-[18px] w-8 items-center justify-center rounded-[2px] border border-[#5a1c18] bg-linear-to-b from-[#d98a7c] from-50% to-[#b83a28] to-50%">
          <svg width="12" height="9" aria-hidden="true">
            <path d="M2 1l8 7M10 1L2 8" stroke="#503030" strokeWidth="4" />
            <path d="M2 1l8 7M10 1L2 8" stroke="#fff" strokeWidth="2" />
          </svg>
        </button>
      </div>
    </div>
    <div className="flex min-h-0 grow flex-col border border-t-[#6a6e74] border-r-white border-b-white border-l-[#6a6e74] bg-[#e0dfe3]">
      <div className="flex min-h-0 grow">
        <div className="min-w-0 grow overflow-hidden">
          <Sheet />
        </div>
        <div className="flex w-[17px] shrink-0 flex-col bg-[#f1f1f1]">
          <button type="button" aria-label="Scroll up" className="flex h-[17px] items-center justify-center">
            <Chevron d="M1 6l3.500-3.500L8 6" />
          </button>
          <span className="mx-px h-[17px] bg-[#cdcdcd]" />
          <span className="grow" />
          <button type="button" aria-label="Scroll down" className="flex h-[17px] items-center justify-center">
            <Chevron d="M1 3l3.500 3.500L8 3" />
          </button>
          <span className="h-1.5 border-y border-black bg-white" />
        </div>
      </div>
      <div className="flex h-[17px] shrink-0">
        <button type="button" aria-label="Previous sheet" className="flex w-[17px] items-center justify-center border border-white border-r-[#808080] border-b-[#808080] bg-[#ececec]">
          <svg width="4" height="7" aria-hidden="true"><path d="M4 0v7L0 3.500z" fill="#404040" /></svg>
        </button>
        <button type="button" aria-label="Next sheet" className="flex w-[17px] items-center justify-center border border-white border-r-[#808080] border-b-[#808080] bg-[#ececec]">
          <svg width="4" height="7" aria-hidden="true"><path d="M0 0v7l4-3.500z" fill="#404040" /></svg>
        </button>
        <div className="flex grow border-t border-r border-black bg-[#c8c8c8] pl-px">
          <button type="button" className="-mt-px flex h-[17px] items-center text-[11px] font-bold">
            <svg width="9" height="17" aria-hidden="true"><path d="M2 0l7 17V0z" fill="#fff" /><path d="M2 0l7 17" stroke="#000" strokeWidth="1.500" /></svg>
            <span className="h-[17px] bg-white px-px leading-[17px]">Sheet1</span>
            <svg width="9" height="17" aria-hidden="true"><path d="M9 0L2 17H0V0z" fill="#fff" /><path d="M9 0L2 17" stroke="#000" strokeWidth="1.500" /></svg>
          </button>
        </div>
        <div className="ml-1 flex w-[175px] shrink-0 items-center justify-between border-x border-black bg-[#f1f1f1] px-[3px]">
          <button type="button" aria-label="Scroll left"><Chevron d="M6 1L2.500 4.500 6 8" /></button>
          <span className="mx-1 h-full grow bg-[#cdcdcd]" />
          <button type="button" aria-label="Scroll right"><Chevron d="M3 1l3.500 3.500L3 8" /></button>
        </div>
        <div className="ml-1 flex w-[18px] shrink-0 items-end justify-end border-t border-l border-black bg-[#f1f1f1] pr-1 pb-0.5">
          <svg width="8" height="8" fill="#b4b4b4" aria-hidden="true"><path d="M6 0h2v2H6zM6 3h2v2H6zM3 3h2v2H3zM6 6h2v2H6zM3 6h2v2H3zM0 6h2v2H0z" /></svg>
        </div>
      </div>
    </div>
  </section>
);

const Workspace = () => (
  <main className="relative min-h-0 grow overflow-hidden border-t border-l border-[#6f6f74] bg-[#ababab]">
    <BookWindow />
    <svg className="absolute top-[295px] left-[496px]" width="12" height="20" viewBox="0 0 12 20" aria-hidden="true">
      <path d="M.5 1v15l3.500-3.500L6.500 18.500l2.500-1L6.500 12h5z" fill="#fff" stroke="#000" />
    </svg>
  </main>
);

const StatusBar = () => (
  <footer className="flex h-5 shrink-0 items-center justify-end border-t border-[#d4d4dc] bg-[#f0f0f3] text-[11px]">
    <span className="h-4 border-l border-[#d8d8de] pr-1 pl-[7px] leading-4">Average=0 Sum=0 Count=241</span>
    <svg width="18" height="12" aria-hidden="true">
      <path d="M5 2h8v6H6v3H5z" fill="#e80c14" />
    </svg>
    <span className="h-4 border-x border-[#d8d8de] px-1 leading-4">AU : ON</span>
    <span className="ml-0.5 h-4 border-l border-[#d8d8de] pr-0.5 pl-2.5 leading-4">1: [Book4]Sheet1!2[1:241]</span>
    <span className="h-4 border-x border-[#d8d8de] px-1 leading-4">Radian</span>
    <svg width="16" height="12" fill="#b8b8bc" aria-hidden="true">
      <path d="M12 2h2v2h-2zM12 6h2v2h-2zM8 6h2v2H8zM12 10h2v2h-2zM8 10h2v2H8zM4 10h2v2H4z" />
    </svg>
  </footer>
);

export default function App() {
  return (
    <div className="h-screen overflow-hidden bg-[#d2d0d0] pt-0.5 pr-[5px] pb-0.5 pl-[3px] font-['Open_Sans',sans-serif] text-black">
      <div className="relative flex h-full flex-col overflow-hidden border border-[#3a83c0]">
        <TitleBar />
        <MenuBar />
        <TopTools />
        <div className="flex min-h-0 grow">
          <LeftDock />
          <div className="flex min-w-0 grow flex-col">
            <Workspace />
            <BottomTools />
          </div>
          <RightDock />
        </div>
        <StatusBar />
        <svg className="absolute bottom-0 left-0.5" width="30" height="30" viewBox="0 0 30 30" fill="none" aria-hidden="true">
          <circle cx="15" cy="15" r="14" fill="#e06a58" stroke="#b84838" />
          <path d="M4 12a11 11 0 0 1 22 0z" fill="#f4b4a6" />
          <path d="M8.500 8h14v15h-14zM8 13h15M8 18h15M13 8v15M18 8v15" stroke="#f6cabe" />
          <path d="M9 22l4-4 3-5 4-1 4-4" stroke="#6a4a50" />
          <path d="M8 22h2M12 18h2M15 13h2M19 12h2M23 8h2" stroke="#3a4a68" strokeWidth="2" />
        </svg>
      </div>
    </div>
  );
}
